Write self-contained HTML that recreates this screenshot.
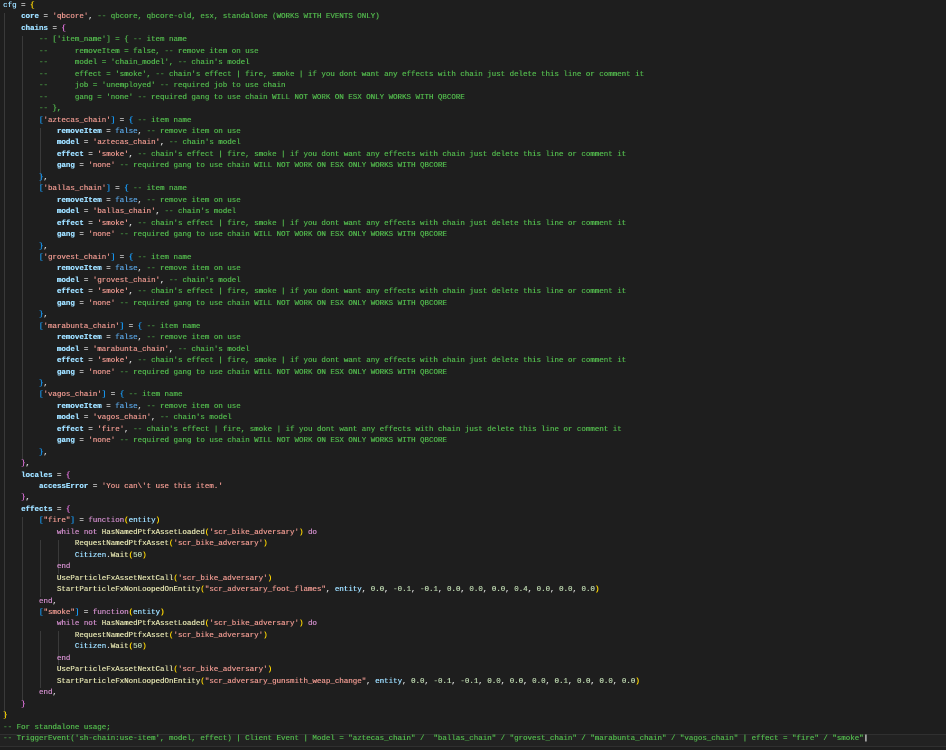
<!DOCTYPE html>
<html><head><meta charset="utf-8"><style>
body{margin:0;background:#1e1e1e;width:946px;height:750px;overflow:hidden;position:relative}
pre{margin:0;position:absolute;left:3px;top:1px;font-family:"Liberation Mono",monospace;font-size:7.48px;line-height:11.45px;color:#d4d4d4;white-space:pre;text-shadow:0.3px 0 0 currentColor}
.k{color:#9cdcfe;font-weight:bold}.v{color:#9cdcfe}
.s{color:#e3938a}.c{color:#4fb04a}.b{color:#569cd6}.n{color:#b5cea8}
.p{color:#c586c0}.f{color:#dcdcaa}
.y{color:#ffd700}.m{color:#da70d6}.l{color:#179fff}
.g{position:absolute;width:1px;background:#3a3a3a}
.cur{position:absolute;left:0;top:734px;width:946px;height:11px;border-top:1px solid #303030;border-bottom:1px solid #303030;background:#222}
</style></head><body>
<div class="g" style="left:4px;top:13px;height:704px"></div>
<div class="g" style="left:22px;top:36px;height:424px"></div>
<div class="g" style="left:22px;top:517px;height:184px"></div>
<div class="g" style="left:40px;top:128px;height:58px"></div>
<div class="g" style="left:40px;top:540px;height:57px"></div>
<div class="g" style="left:40px;top:631px;height:57px"></div>
<div class="g" style="left:58px;top:540px;height:34px"></div>
<div class="g" style="left:58px;top:631px;height:34px"></div>
<div class="cur"></div>
<pre><span class="v">cfg</span> = <span class="y">{</span>
    <span class="k">core</span> = <span class="s">'qbcore'</span>, <span class="c">-- qbcore, qbcore-old, esx, standalone (WORKS WITH EVENTS ONLY)</span>
    <span class="k">chains</span> = <span class="m">{</span>
<span class="c">        -- ['item_name'] = { -- item name
        --      removeItem = false, -- remove item on use
        --      model = 'chain_model', -- chain's model
        --      effect = 'smoke', -- chain's effect | fire, smoke | if you dont want any effects with chain just delete this line or comment it
        --      job = 'unemployed' -- required job to use chain
        --      gang = 'none' -- required gang to use chain WILL NOT WORK ON ESX ONLY WORKS WITH QBCORE
        -- },</span>
        <span class="l">[</span><span class="s">'aztecas_chain'</span><span class="l">]</span> = <span class="l">{</span> <span class="c">-- item name</span>
            <span class="k">removeItem</span> = <span class="b">false</span>, <span class="c">-- remove item on use</span>
            <span class="k">model</span> = <span class="s">'aztecas_chain'</span>, <span class="c">-- chain's model</span>
            <span class="k">effect</span> = <span class="s">'smoke'</span>, <span class="c">-- chain's effect | fire, smoke | if you dont want any effects with chain just delete this line or comment it</span>
            <span class="k">gang</span> = <span class="s">'none'</span> <span class="c">-- required gang to use chain WILL NOT WORK ON ESX ONLY WORKS WITH QBCORE</span>
        <span class="l">}</span>,
        <span class="l">[</span><span class="s">'ballas_chain'</span><span class="l">]</span> = <span class="l">{</span> <span class="c">-- item name</span>
            <span class="k">removeItem</span> = <span class="b">false</span>, <span class="c">-- remove item on use</span>
            <span class="k">model</span> = <span class="s">'ballas_chain'</span>, <span class="c">-- chain's model</span>
            <span class="k">effect</span> = <span class="s">'smoke'</span>, <span class="c">-- chain's effect | fire, smoke | if you dont want any effects with chain just delete this line or comment it</span>
            <span class="k">gang</span> = <span class="s">'none'</span> <span class="c">-- required gang to use chain WILL NOT WORK ON ESX ONLY WORKS WITH QBCORE</span>
        <span class="l">}</span>,
        <span class="l">[</span><span class="s">'grovest_chain'</span><span class="l">]</span> = <span class="l">{</span> <span class="c">-- item name</span>
            <span class="k">removeItem</span> = <span class="b">false</span>, <span class="c">-- remove item on use</span>
            <span class="k">model</span> = <span class="s">'grovest_chain'</span>, <span class="c">-- chain's model</span>
            <span class="k">effect</span> = <span class="s">'smoke'</span>, <span class="c">-- chain's effect | fire, smoke | if you dont want any effects with chain just delete this line or comment it</span>
            <span class="k">gang</span> = <span class="s">'none'</span> <span class="c">-- required gang to use chain WILL NOT WORK ON ESX ONLY WORKS WITH QBCORE</span>
        <span class="l">}</span>,
        <span class="l">[</span><span class="s">'marabunta_chain'</span><span class="l">]</span> = <span class="l">{</span> <span class="c">-- item name</span>
            <span class="k">removeItem</span> = <span class="b">false</span>, <span class="c">-- remove item on use</span>
            <span class="k">model</span> = <span class="s">'marabunta_chain'</span>, <span class="c">-- chain's model</span>
            <span class="k">effect</span> = <span class="s">'smoke'</span>, <span class="c">-- chain's effect | fire, smoke | if you dont want any effects with chain just delete this line or comment it</span>
            <span class="k">gang</span> = <span class="s">'none'</span> <span class="c">-- required gang to use chain WILL NOT WORK ON ESX ONLY WORKS WITH QBCORE</span>
        <span class="l">}</span>,
        <span class="l">[</span><span class="s">'vagos_chain'</span><span class="l">]</span> = <span class="l">{</span> <span class="c">-- item name</span>
            <span class="k">removeItem</span> = <span class="b">false</span>, <span class="c">-- remove item on use</span>
            <span class="k">model</span> = <span class="s">'vagos_chain'</span>, <span class="c">-- chain's model</span>
            <span class="k">effect</span> = <span class="s">'fire'</span>, <span class="c">-- chain's effect | fire, smoke | if you dont want any effects with chain just delete this line or comment it</span>
            <span class="k">gang</span> = <span class="s">'none'</span> <span class="c">-- required gang to use chain WILL NOT WORK ON ESX ONLY WORKS WITH QBCORE</span>
        <span class="l">}</span>,
    <span class="m">}</span>,
    <span class="k">locales</span> = <span class="m">{</span>
        <span class="k">accessError</span> = <span class="s">'You can\'t use this item.'</span>
    <span class="m">}</span>,
    <span class="k">effects</span> = <span class="m">{</span>
        <span class="l">[</span><span class="s">"fire"</span><span class="l">]</span> = <span class="p">function</span><span class="y">(</span><span class="v">entity</span><span class="y">)</span>
            <span class="p">while not</span> <span class="f">HasNamedPtfxAssetLoaded</span><span class="y">(</span><span class="s">'scr_bike_adversary'</span><span class="y">)</span> <span class="p">do</span>
                <span class="f">RequestNamedPtfxAsset</span><span class="y">(</span><span class="s">'scr_bike_adversary'</span><span class="y">)</span>
                <span class="v">Citizen</span>.<span class="f">Wait</span><span class="y">(</span><span class="n">50</span><span class="y">)</span>
            <span class="p">end</span>
            <span class="f">UseParticleFxAssetNextCall</span><span class="y">(</span><span class="s">'scr_bike_adversary'</span><span class="y">)</span>
            <span class="f">StartParticleFxNonLoopedOnEntity</span><span class="y">(</span><span class="s">"scr_adversary_foot_flames"</span>, <span class="v">entity</span>, <span class="n">0.0</span>, <span class="n">-0.1</span>, <span class="n">-0.1</span>, <span class="n">0.0</span>, <span class="n">0.0</span>, <span class="n">0.0</span>, <span class="n">0.4</span>, <span class="n">0.0</span>, <span class="n">0.0</span>, <span class="n">0.0</span><span class="y">)</span>
        <span class="p">end</span>,
        <span class="l">[</span><span class="s">"smoke"</span><span class="l">]</span> = <span class="p">function</span><span class="y">(</span><span class="v">entity</span><span class="y">)</span>
            <span class="p">while not</span> <span class="f">HasNamedPtfxAssetLoaded</span><span class="y">(</span><span class="s">'scr_bike_adversary'</span><span class="y">)</span> <span class="p">do</span>
                <span class="f">RequestNamedPtfxAsset</span><span class="y">(</span><span class="s">'scr_bike_adversary'</span><span class="y">)</span>
                <span class="v">Citizen</span>.<span class="f">Wait</span><span class="y">(</span><span class="n">50</span><span class="y">)</span>
            <span class="p">end</span>
            <span class="f">UseParticleFxAssetNextCall</span><span class="y">(</span><span class="s">'scr_bike_adversary'</span><span class="y">)</span>
            <span class="f">StartParticleFxNonLoopedOnEntity</span><span class="y">(</span><span class="s">"scr_adversary_gunsmith_weap_change"</span>, <span class="v">entity</span>, <span class="n">0.0</span>, <span class="n">-0.1</span>, <span class="n">-0.1</span>, <span class="n">0.0</span>, <span class="n">0.0</span>, <span class="n">0.0</span>, <span class="n">0.1</span>, <span class="n">0.0</span>, <span class="n">0.0</span>, <span class="n">0.0</span><span class="y">)</span>
        <span class="p">end</span>,
    <span class="m">}</span>
<span class="y">}</span>
<span class="c">-- For standalone usage;</span>
<span class="c">-- TriggerEvent('sh-chain:use-item', model, effect) | Client Event | Model = "aztecas_chain" /  "ballas_chain" / "grovest_chain" / "marabunta_chain" / "vagos_chain" | effect = "fire" / "smoke"</span><span style="color:#fff">|</span></pre>
</body></html>
